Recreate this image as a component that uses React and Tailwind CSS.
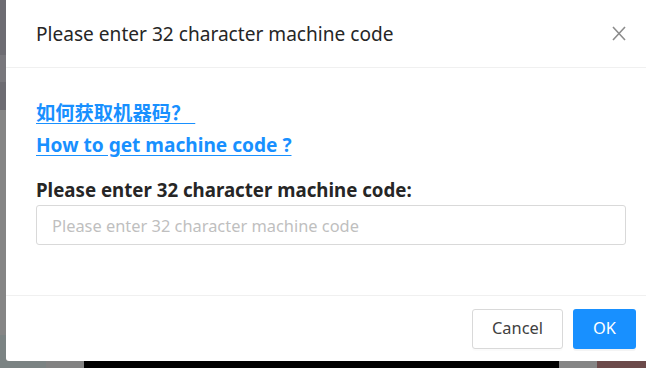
import { useState } from "react";

const font = {
  fontFamily: '"Noto Sans", "Noto Sans CJK SC", sans-serif',
};

const CloseIcon = () => (
  <svg width="14" height="15" viewBox="0 0 14 15" fill="none">
    <path d="M1 1L13 14M13 1L1 14" stroke="#8c8c8c" strokeWidth="1.6" />
  </svg>
);

const MachineCodeModal = () => {
  const [code, setCode] = useState("");

  return (
    <div className="flex flex-1 flex-col rounded-bl-[3px] bg-white">
      {/* header */}
      <div className="flex h-[68px] items-center justify-between border-b border-[#f0f0f0] pl-[30px] pr-[19px]">
        <h3 className="pt-[1px] text-[19.1px] font-normal leading-[26px] text-[#262626]">
          Please enter 32 character machine code
        </h3>
        <button className="flex h-[16px] w-[16px] items-center justify-center">
          <CloseIcon />
        </button>
      </div>

      {/* body */}
      <div className="flex h-[227px] flex-col pl-[30px] pr-[20px] pt-[29px]">
        <a
          href="#"
          className="self-start text-[19.3px] font-bold leading-[32px] text-[#1890ff] underline underline-offset-[3px]"
        >
          如何获取机器码？&nbsp;
        </a>
        <a
          href="#"
          className="self-start text-[19.1px] font-bold leading-[32px] text-[#1890ff] underline underline-offset-[3px]"
        >
          How to get machine code ?
        </a>
        <label className="mt-[17px] text-[18.7px] font-bold leading-[24px] text-[#262626]">
          Please enter 32 character machine code:
        </label>
        <input
          type="text"
          value={code}
          onChange={(e) => setCode(e.target.value)}
          placeholder="Please enter 32 character machine code"
          className="mt-[3px] h-[40px] w-full rounded-[3px] border border-[#d9d9d9] px-[15px] text-[16.4px] text-[#262626] outline-none placeholder:text-[#bfbfbf]"
        />
      </div>

      {/* footer */}
      <div className="flex h-[66px] items-center justify-end gap-[10px] border-t border-[#f0f0f0] pr-[10px]">
        <button className="h-[40px] w-[91px] rounded-[3px] border border-[#d9d9d9] bg-white text-[16.4px] text-[#404040] shadow-[0_2px_0_rgba(0,0,0,0.015)]">
          Cancel
        </button>
        <button className="h-[40px] w-[63px] rounded-[3px] bg-[#1890ff] text-[16.4px] text-white shadow-[0_2px_0_rgba(0,0,0,0.045)]">
          OK
        </button>
      </div>
    </div>
  );
};

export default function App() {
  return (
    <div className="flex h-[368px] w-[646px] flex-col overflow-hidden bg-[#808080]" style={font}>
      <div className="flex h-[361px]">
        {/* page behind the mask, left edge */}
        <div className="flex w-[6px] flex-col">
          <div className="h-[55px] bg-[#6d6c72]" />
          <div className="h-[27px] bg-[#78777c]" />
          <div className="h-[28px] bg-[#6d6c72]" />
          <div className="h-[225px] bg-[#858585]" />
          <div className="flex-1 bg-[#7b8383]" />
        </div>
        <MachineCodeModal />
      </div>
      {/* page behind the mask, bottom edge */}
      <div className="flex flex-1">
        <div className="w-[46px] bg-[#7b8383]" />
        <div className="w-[38px] bg-[#828282]" />
        <div className="w-[475px] bg-black" />
        <div className="w-[38px] bg-[#858585]" />
        <div className="flex-1 bg-[#6c4a4a]" />
      </div>
    </div>
  );
}
